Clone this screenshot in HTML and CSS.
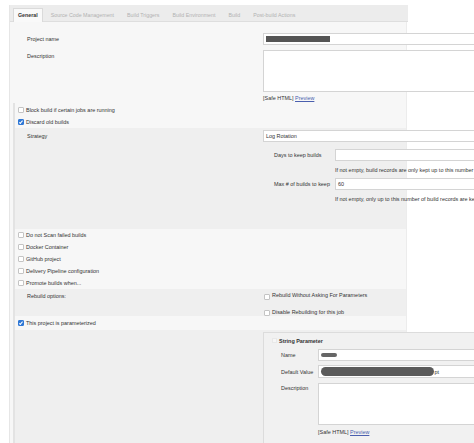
FILE: index.html
```html
<!DOCTYPE html>
<html>
<head>
<meta charset="utf-8">
<link rel="stylesheet" href="styles.css">
</head>
<body>
<div class="page">
  <div class="panel">
    <div class="tabs">
      <div class="tab active">General</div>
      <div class="tab">Source Code Management</div>
      <div class="tab">Build Triggers</div>
      <div class="tab">Build Environment</div>
      <div class="tab">Build</div>
      <div class="tab">Post-build Actions</div>
    </div>

    <div class="row r-name">
      <div class="lab">Project name</div>
      <div class="inp"><span class="redact red-name"></span></div>
    </div>
    <div class="row r-desc">
      <div class="lab lab-top">Description</div>
      <div class="field">
        <div class="ta"></div>
        <div class="safe">[Safe HTML] <span class="link">Preview</span></div>
      </div>
    </div>

    <div class="sect">
      <div class="cb-row"><span class="cb"></span>Block build if certain jobs are running</div>
      <div class="cb-row"><span class="cb on"></span>Discard old builds</div>

      <div class="nest strat">
        <div class="row">
          <div class="lab">Strategy</div>
          <div class="inp sel">Log Rotation</div>
        </div>
        <div class="sub-row first">
          <div class="sub-lab">Days to keep builds</div>
          <div class="inp sub-inp"></div>
        </div>
        <div class="help">If not empty, build records are only kept up to this number of days</div>
        <div class="sub-row second">
          <div class="sub-lab">Max # of builds to keep</div>
          <div class="inp sub-inp">60</div>
        </div>
        <div class="help">If not empty, only up to this number of build records are kept</div>
      </div>

      <div class="cb-list">
        <div class="cb-row"><span class="cb"></span>Do not Scan failed builds</div>
        <div class="cb-row"><span class="cb"></span>Docker Container</div>
        <div class="cb-row"><span class="cb"></span>GitHub project</div>
        <div class="cb-row"><span class="cb"></span>Delivery Pipeline configuration</div>
        <div class="cb-row"><span class="cb"></span>Promote builds when...</div>
      </div>

      <div class="nest rebuild">
        <div class="lab lab-rb">Rebuild options:</div>
        <div class="rb-opts">
          <div class="rb-item"><span class="cb rb-cb"></span>Rebuild Without Asking For Parameters</div>
          <div class="rb-item second"><span class="cb rb-cb"></span>Disable Rebuilding for this job</div>
        </div>
      </div>

      <div class="cb-row param-row"><span class="cb on"></span>This project is parameterized</div>

      <div class="nest params">
        <div class="pbox">
          <div class="phead"><span class="handle"></span>String Parameter</div>
          <div class="prow">
            <div class="plab">Name</div>
            <div class="inp pinp"><span class="redact red-small"></span></div>
          </div>
          <div class="prow pdef">
            <div class="plab">Default Value</div>
            <div class="inp pinp"><span class="redact red-oval"></span><span class="tail">pt</span></div>
          </div>
          <div class="prow pdesc">
            <div class="plab plab-top">Description</div>
            <div class="field">
              <div class="ta pta"></div>
              <div class="safe psafe">[Safe HTML] <span class="link">Preview</span></div>
            </div>
          </div>
        </div>
      </div>
    </div>
  </div>
</div>
</body>
</html>
```

FILE: styles.css
```css
html, body {
  margin: 0;
  padding: 0;
  background: #ffffff;
}

.page {
  width: 474px;
  height: 443px;
  overflow: hidden;
  padding: 5px 0 0 9px;
  box-sizing: border-box;
  font-family: "Liberation Sans", Arial, sans-serif;
  font-size: 5.45px;
  color: #333333;
}

.panel {
  width: 398px;
  min-height: 460px;
  background: #f7f7f7;
  border-left: 1px solid #e6e6e6;
  border-right: 1px solid #ececec;
  box-sizing: border-box;
}

/* Tabs */
.tabs {
  height: 17px;
  box-sizing: border-box;
  background: #ececec;
  border-bottom: 1px solid #dedede;
  display: flex;
  align-items: flex-end;
  padding-left: 3px;
  margin-right: -2px;
  font-size: 5.3px;
}

.tab {
  height: 12px;
  line-height: 12px;
  padding: 0 6.5px;
  color: #b2b2b2;
  white-space: nowrap;
}

.tab.active {
  height: 13px;
  margin-bottom: -1px;
  padding: 0 4px;
  margin-right: 1.5px;
  background: #f9f9f9;
  border: 1px solid #dadada;
  border-bottom: none;
  font-weight: bold;
  color: #333;
}

/* Generic rows */
.row {
  display: flex;
  align-items: center;
}

.lab {
  width: 253px;
  padding-left: 17px;
  box-sizing: border-box;
  flex: none;
  white-space: nowrap;
}

.lab-top {
  align-self: flex-start;
  padding-top: 2.5px;
  line-height: 7px;
}

.field {
  flex: none;
}

.inp {
  width: 240px;
  height: 12px;
  flex: none;
  box-sizing: border-box;
  background: #ffffff;
  border: 1px solid #d4d4d4;
  display: flex;
  align-items: center;
  padding-left: 2px;
  white-space: nowrap;
}

.ta {
  width: 240px;
  height: 42px;
  box-sizing: border-box;
  background: #ffffff;
  border: 1px solid #d4d4d4;
}

.safe {
  margin-top: 2.5px;
  line-height: 7px;
  white-space: nowrap;
}

.link {
  color: #4a5fae;
  text-decoration: underline;
}

.redact {
  display: inline-block;
  background: #555555;
}

.red-name {
  width: 64px;
  height: 6px;
}

.r-name {
  margin-top: 11px;
}

.r-desc {
  margin-top: 5px;
  align-items: flex-start;
}

/* Section with left rule */
.sect {
  margin-top: 1.5px;
  margin-left: 3px;
  padding-top: 1px;
  border-left: 2px solid #e3e3e3;
}

.sect .lab {
  width: 248px;
  padding-left: 12px;
}

.cb-row {
  height: 12px;
  display: flex;
  align-items: center;
  padding-left: 3px;
  white-space: nowrap;
}

.cb {
  width: 6px;
  height: 6px;
  box-sizing: border-box;
  border: 1px solid #c4c4c4;
  border-radius: 1px;
  background: #ffffff;
  margin-right: 2px;
  flex: none;
  position: relative;
}

.cb.on {
  background: #2f78d6;
  border-color: #2f78d6;
}

.cb.on::after {
  content: "";
  position: absolute;
  left: 1.2px;
  top: 0.2px;
  width: 1.4px;
  height: 2.6px;
  border: solid #ffffff;
  border-width: 0 0.9px 0.9px 0;
  transform: rotate(40deg);
}

/* Nested grey blocks */
.nest {
  background: #efefef;
}

.strat {
  padding-top: 2px;
  padding-bottom: 26px;
}

.sub-row {
  display: flex;
  align-items: center;
  padding-left: 259px;
  margin-top: 4.5px;
}

.sub-row.first {
  margin-top: 7px;
}

.sub-lab {
  width: 61px;
  flex: none;
  white-space: nowrap;
}

.sub-inp {
  width: 200px;
}

.help {
  padding-left: 320px;
  margin-top: 5.5px;
  line-height: 7px;
  white-space: nowrap;
}

.cb-list {
  margin-top: 0.5px;
}

/* Rebuild block */
.rebuild {
  display: flex;
  align-items: flex-start;
  padding-top: 2px;
  height: 26.5px;
  box-sizing: border-box;
}

.lab-rb {
  padding-top: 1.5px;
  line-height: 7px;
}

.rb-opts {
  flex: none;
}

.rb-item {
  height: 8px;
  display: flex;
  align-items: center;
  padding-left: 1px;
  white-space: nowrap;
}

.rb-item.second {
  margin-top: 8.5px;
}

.rb-cb {
  margin-top: 3px;
}

.param-row {
  height: 14.5px;
}

/* Parameter block */
.params {
  padding-top: 2px;
  padding-left: 248px;
  min-height: 130px;
}

.pbox {
  border: 1px solid #dcdcdc;
  border-right: none;
  background: #f1f1f1;
  min-height: 130px;
  width: 260px;
}

.phead {
  height: 16px;
  box-sizing: border-box;
  padding-left: 8px;
  display: flex;
  align-items: center;
  font-weight: bold;
  white-space: nowrap;
  padding-bottom: 1px;
}

.handle {
  width: 5px;
  height: 5px;
  background: #f6f6f6;
  border: 1px solid #e8e8e8;
  box-sizing: border-box;
  margin-right: 2px;
}

.prow {
  display: flex;
  align-items: center;
}

.pdef {
  margin-top: 4px;
}

.pdef .pinp {
  height: 13px;
}

.pdesc {
  margin-top: 5px;
  align-items: flex-start;
}

.plab {
  width: 54px;
  padding-left: 17px;
  box-sizing: border-box;
  flex: none;
  white-space: nowrap;
}

.plab-top {
  padding-top: 1.5px;
  line-height: 7px;
}

.pinp {
  width: 200px;
}

.pta {
  width: 200px;
}

.psafe {
  margin-top: 3.5px;
}

.red-small {
  width: 16px;
  height: 3.6px;
  border-radius: 2px;
  background: #666;
}

.red-oval {
  width: 113px;
  height: 9px;
  border-radius: 5px;
  background: #5a5a5a;
}

.tail {
  margin-left: 0.5px;
}
```
